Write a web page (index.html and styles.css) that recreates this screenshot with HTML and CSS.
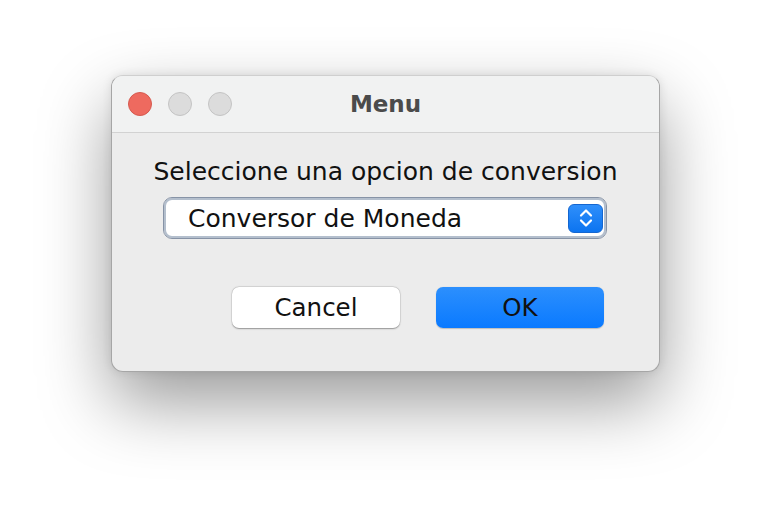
FILE: index.html
```html
<!DOCTYPE html>
<html>
<head>
<meta charset="utf-8">
<link rel="stylesheet" href="styles.css">
</head>
<body>
<div class="window">
  <div class="titlebar">
    <div class="lights">
      <span class="light close"></span>
      <span class="light off"></span>
      <span class="light off"></span>
    </div>
    <div class="title">Menu</div>
  </div>
  <div class="content">
    <div class="label">Seleccione una opcion de conversion</div>
    <div class="combo">
      <span class="combo-text">Conversor de Moneda</span>
      <span class="stepper">
        <svg width="16" height="24" viewBox="0 0 16 24">
          <path d="M3 9.5 L8 4.5 L13 9.5" fill="none" stroke="#fff" stroke-width="2.2" stroke-linecap="round" stroke-linejoin="round"/>
          <path d="M3 14.5 L8 19.5 L13 14.5" fill="none" stroke="#fff" stroke-width="2.2" stroke-linecap="round" stroke-linejoin="round"/>
        </svg>
      </span>
    </div>
    <div class="buttons">
      <div class="btn cancel">Cancel</div>
      <div class="btn ok">OK</div>
    </div>
  </div>
</div>
</body>
</html>
```
FILE: styles.css
```css
html, body {
  margin: 0;
  padding: 0;
  background: #ffffff;
}
body {
  box-sizing: border-box;
  height: 520px;
  padding: 75px 0 0 111px;
  font-family: "DejaVu Sans", "Liberation Sans", sans-serif;
  color: #111;
}
.window {
  width: 549px;
  height: 297px;
  box-sizing: border-box;
  border-radius: 12px;
  background: #ececec;
  border: 1px solid #a6a6a6;
  border-top-color: #cfcfcf;
  box-shadow: 0 30px 70px rgba(0,0,0,0.4), 0 0 10px rgba(0,0,0,0.1);
  overflow: hidden;
  display: flex;
  flex-direction: column;
}
.titlebar {
  height: 56px;
  flex: none;
  background: #f1f2f2;
  border-bottom: 1px solid #d2d2d2;
  display: flex;
  align-items: center;
  position: relative;
}
.lights {
  display: flex;
  gap: 16px;
  padding-left: 16px;
}
.light {
  width: 22px;
  height: 22px;
  border-radius: 50%;
  display: block;
}
.close {
  background: #ee6a5f;
  border: 1px solid #d65a4f;
}
.off {
  background: #dcdcdc;
  border: 1px solid #c4c4c4;
}
.title {
  position: absolute;
  left: 0;
  right: 0;
  top: 0;
  bottom: 0;
  display: flex;
  align-items: center;
  justify-content: center;
  font-weight: bold;
  font-size: 23px;
  color: #4b4b4b;
}
.content {
  flex: 1;
  display: flex;
  flex-direction: column;
  padding-top: 23px;
}
.label {
  align-self: center;
  font-size: 25px;
  line-height: 32px;
  color: #111;
}
.combo {
  margin: 9px 0 0 51px;
  width: 444px;
  height: 42px;
  box-sizing: border-box;
  border-radius: 9px;
  border: 1px solid #8793a6;
  box-shadow: inset 0 0 0 2px #b4bfcd;
  background: #fff;
  display: flex;
  align-items: center;
  justify-content: space-between;
  padding: 0 3px 0 24px;
}
.combo-text {
  font-size: 25px;
  color: #111;
}
.stepper {
  width: 35px;
  height: 29px;
  box-sizing: border-box;
  border-radius: 6px;
  background: linear-gradient(#2f8ffb, #0c74f0);
  border: 1px solid #1466d0;
  display: flex;
  align-items: center;
  justify-content: center;
}
.buttons {
  margin-top: 48px;
  display: flex;
  justify-content: flex-end;
  gap: 36px;
  padding-right: 55px;
}
.btn {
  width: 168px;
  height: 41px;
  box-sizing: border-box;
  border-radius: 7px;
  display: flex;
  align-items: center;
  justify-content: center;
  font-size: 24.5px;
  color: #111;
}
.cancel {
  background: #fff;
  box-shadow: 0 0.5px 1.5px rgba(0,0,0,0.35), 0 0 0 0.5px rgba(0,0,0,0.08);
}
.ok {
  background: linear-gradient(#2c8ffd, #0a7aff);
  box-shadow: 0 0.5px 1px rgba(0,0,0,0.2);
}
```
